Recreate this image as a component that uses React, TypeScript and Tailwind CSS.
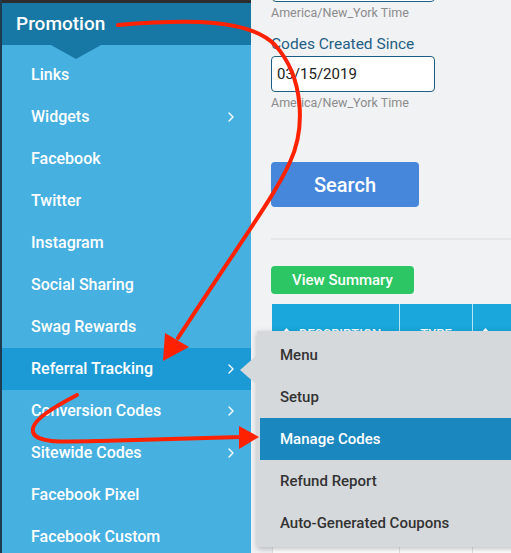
import { ChevronRight } from "lucide-react";

const items: { label: string; more?: boolean; active?: boolean }[] = [
  { label: "Links" },
  { label: "Widgets", more: true },
  { label: "Facebook" },
  { label: "Twitter" },
  { label: "Instagram" },
  { label: "Social Sharing" },
  { label: "Swag Rewards" },
  { label: "Referral Tracking", more: true, active: true },
  { label: "Conversion Codes", more: true },
  { label: "Sitewide Codes", more: true },
  { label: "Facebook Pixel" },
  { label: "Facebook Custom" },
];

const subItems = ["Menu", "Setup", "Manage Codes", "Refund Report", "Auto-Generated Coupons"];

function SortIcon() {
  return (
    <svg width="9" height="12" viewBox="0 0 9 12" className="shrink-0">
      <path d="M4.5 0 L9 5 L0 5 Z" fill="white" />
      <rect x="0" y="7" width="9" height="2" fill="white" opacity="0.8" />
    </svg>
  );
}

export default function App() {
  return (
    <div className="relative flex h-[553px] w-[511px] overflow-hidden font-['Roboto',sans-serif]">
      {/* sidebar */}
      <aside className="flex w-[251px] shrink-0 flex-col border-l-2 border-[#1d3c4f] bg-[#46b0e1]">
        <div className="h-[3px] shrink-0 bg-[#2d2d30]" />
        <div className="relative flex h-[42px] shrink-0 items-center bg-[#1878a5] pl-[14px] text-[19px] font-medium text-white">
          Promotion
          <div className="absolute left-[49px] top-[42px] h-0 w-0 border-x-[25px] border-t-[14px] border-x-transparent border-t-[#1878a5]" />
        </div>
        <div className="h-[9px] shrink-0" />
        {items.map((it) => (
          <div
            key={it.label}
            className={`flex h-[42px] shrink-0 items-center justify-between pl-[29px] pr-[12px] text-[16px] font-medium text-white ${
              it.active ? "bg-[#1c9ad6]" : ""
            }`}
          >
            <span>{it.label}</span>
            {it.more && <ChevronRight size={16} strokeWidth={2} />}
          </div>
        ))}
      </aside>

      {/* main */}
      <main className="flex flex-1 flex-col bg-[#f1f2f4] pl-[20px]">
        <div className="-mt-[35px] ml-[1px] h-[37px] w-[163px] shrink-0 rounded-[4px] border border-[#1f5f86] bg-white" />
        <p className="mt-[3px] text-[12.5px] leading-[16px] text-[#8c8c8c]">America/New_York Time</p>
        <label className="mt-[14px] text-[15.5px] leading-[18px] text-[#1f5f86]">Codes Created Since</label>
        <div className="mt-[3px] flex h-[36px] w-[164px] shrink-0 items-center rounded-[4px] border border-[#1f5f86] bg-white pl-[5px] text-[15px] text-[#222]">
          03/15/2019
        </div>
        <p className="mt-[3px] text-[12.5px] leading-[16px] text-[#8c8c8c]">America/New_York Time</p>
        <button className="mt-[51px] flex h-[45px] w-[148px] shrink-0 items-center justify-center rounded-[4px] bg-[#4687dc] text-[20px] font-medium text-white">
          Search
        </button>
        <div className="mt-[31px] h-[2px] shrink-0 bg-[#e6e7e9]" />
        <button className="mt-[26px] flex h-[28px] w-[143px] shrink-0 items-center justify-center rounded-[4px] bg-[#2dc664] text-[15px] font-medium text-white">
          View Summary
        </button>
        <div className="mt-[10px] ml-[1px] flex flex-1 flex-col">
          <div className="flex h-[60px] shrink-0 bg-[#1aa7dc] text-[13px] font-medium text-white">
            <div className="flex w-[128px] items-center gap-[8px] border-r border-white/70 pl-[10px]">
              <SortIcon />
              DESCRIPTION
            </div>
            <div className="flex w-[73px] items-center justify-center border-r border-white/70">TYPE</div>
            <div className="flex flex-1 items-center pl-[8px]">
              <SortIcon />
            </div>
          </div>
          <div className="flex flex-1 bg-white">
            <div className="w-[128px] border-x border-[#e2e3e5]" />
            <div className="w-[73px] border-r border-[#e2e3e5]" />
            <div className="flex-1" />
          </div>
        </div>
      </main>

      {/* submenu popover */}
      <div className="absolute left-[257px] top-[331px] w-[260px] bg-[#d6d9dc] py-[3px] pl-[3px] shadow-[0_2px_6px_rgba(0,0,0,0.25)]">
        <div className="absolute -left-[17px] top-[24px] h-0 w-0 border-y-[15px] border-r-[17px] border-y-transparent border-r-[#d6d9dc]" />
        {subItems.map((s) => (
          <div
            key={s}
            className={`flex h-[42px] items-center pl-[20px] text-[15px] font-medium ${
              s === "Manage Codes" ? "bg-[#1a87bf] text-white" : "text-[#333]"
            }`}
          >
            {s}
          </div>
        ))}
      </div>

      {/* annotation arrows */}
      <svg className="pointer-events-none absolute left-0 top-0" width="511" height="553" viewBox="0 0 511 553">
        <path
          d="M118 25 C 190 19, 250 19, 275 45 C 305 78, 305 130, 290 162 C 275 195, 250 228, 178 338"
          fill="none"
          stroke="#ff2200"
          strokeWidth="4"
          strokeLinecap="round"
        />
        <path d="M163 361 L 165 333 L 189 347 Z" fill="#ff2200" />
        <path
          d="M77 395 C 58 405, 30 420, 33 432 C 36 443, 60 442, 100 441 L 242 437"
          fill="none"
          stroke="#ff2200"
          strokeWidth="4"
          strokeLinecap="round"
        />
        <path d="M259 437 L 239 426 L 239 449 Z" fill="#ff2200" />
      </svg>
    </div>
  );
}
